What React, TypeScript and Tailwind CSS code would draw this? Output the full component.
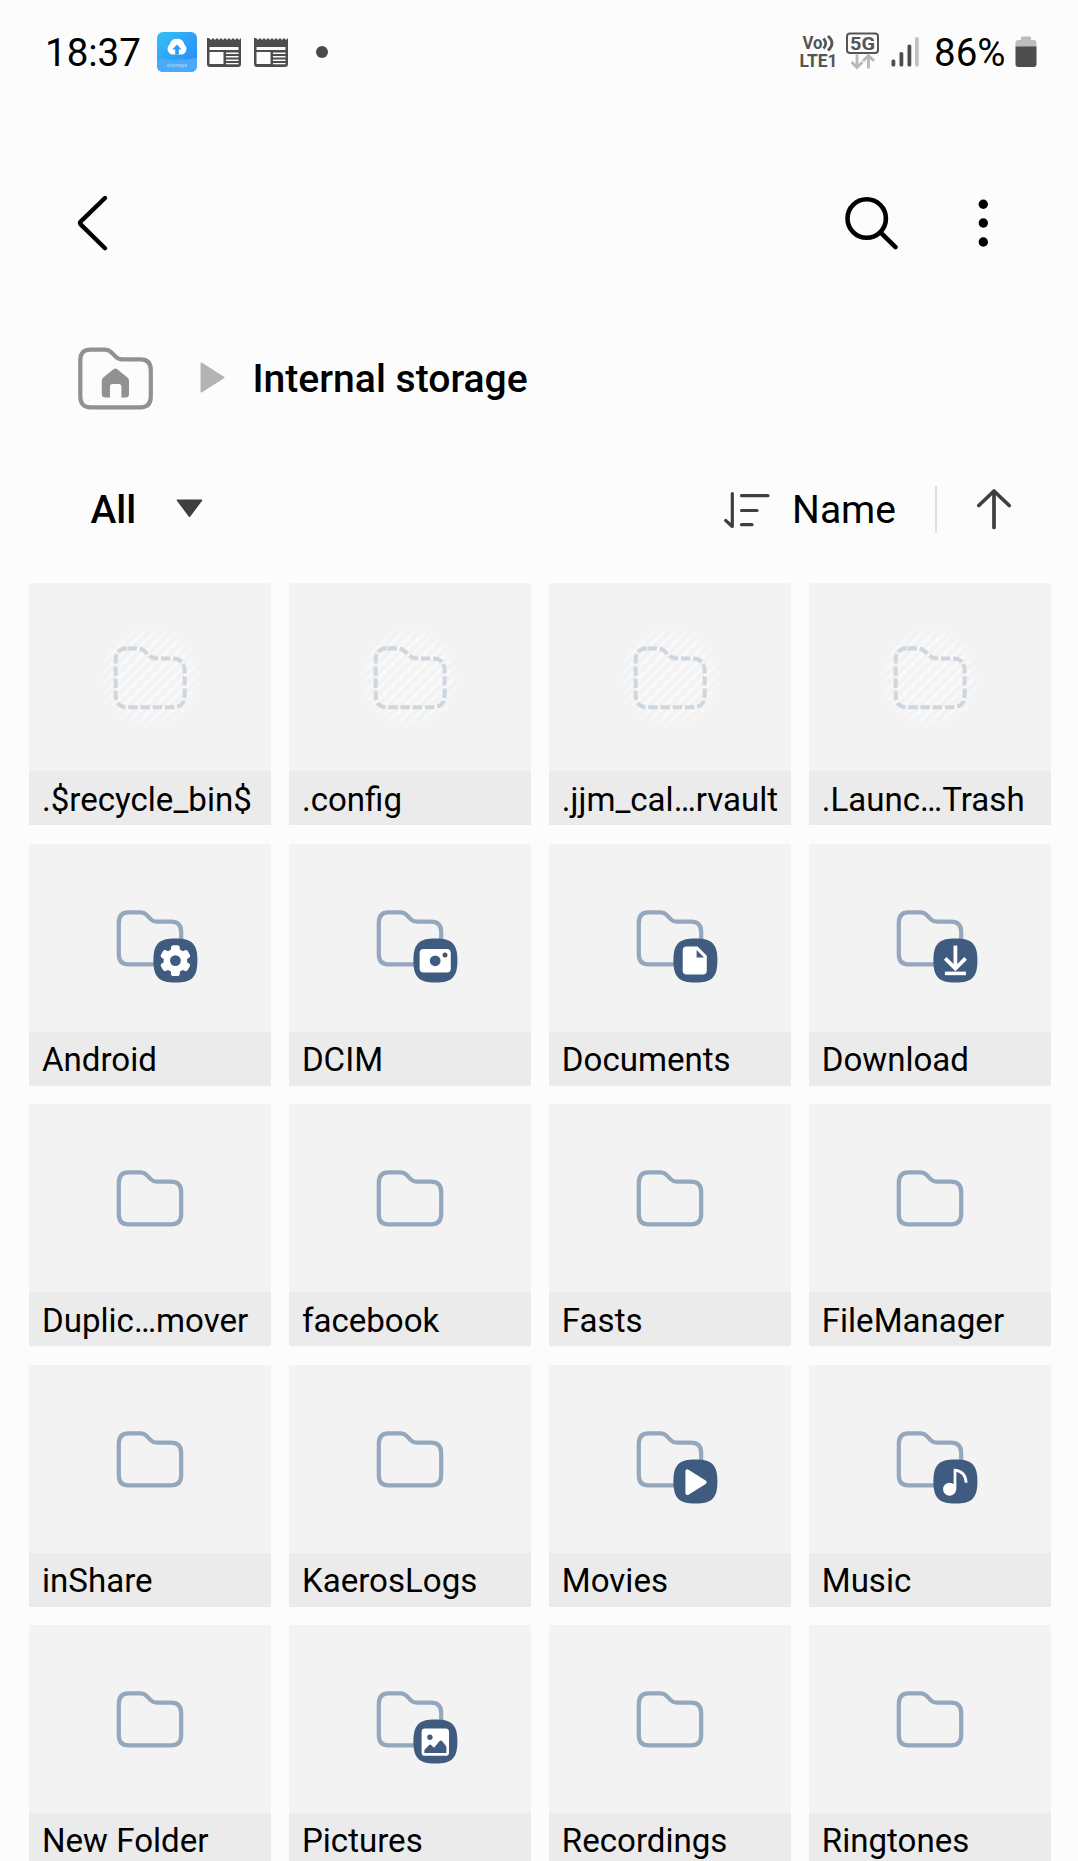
import type { ReactNode } from "react";

type Badge = "settings" | "camera" | "document" | "download" | "play" | "music" | "picture";

interface Folder {
  name: string;
  hidden?: boolean;
  badge?: Badge;
}

const FOLDERS: Folder[] = [
  { name: ".$recycle_bin$", hidden: true },
  { name: ".config", hidden: true },
  { name: ".jjm_cal…rvault", hidden: true },
  { name: ".Launc…Trash", hidden: true },
  { name: "Android", badge: "settings" },
  { name: "DCIM", badge: "camera" },
  { name: "Documents", badge: "document" },
  { name: "Download", badge: "download" },
  { name: "Duplic…mover" },
  { name: "facebook" },
  { name: "Fasts" },
  { name: "FileManager" },
  { name: "inShare" },
  { name: "KaerosLogs" },
  { name: "Movies", badge: "play" },
  { name: "Music", badge: "music" },
  { name: "New Folder" },
  { name: "Pictures", badge: "picture" },
  { name: "Recordings" },
  { name: "Ringtones" },
];

const NAVY = "#3f5b80";

const BADGES: Record<Badge, ReactNode> = {
  settings: (
    <>
      <g fill="#fff">
        <circle cx="22" cy="22" r="11.8" />
        <rect x="17.6" y="6.6" width="8.8" height="30.8" rx="2.6" />
        <rect x="17.6" y="6.6" width="8.8" height="30.8" rx="2.6" transform="rotate(60 22 22)" />
        <rect x="17.6" y="6.6" width="8.8" height="30.8" rx="2.6" transform="rotate(120 22 22)" />
      </g>
      <circle cx="22" cy="22" r="5.4" fill={NAVY} />
    </>
  ),
  camera: (
    <>
      <rect x="6.2" y="10.4" width="31.2" height="23.6" rx="4" fill="#fff" />
      <circle cx="21.8" cy="22.2" r="5.4" fill={NAVY} />
      <circle cx="31.6" cy="16.4" r="2.5" fill="#4a5564" />
    </>
  ),
  document: (
    <>
      <path d="M13.3 8H24.2L33.4 17.2V32A4 4 0 0 1 29.4 36H13.3A4 4 0 0 1 9.3 32V12A4 4 0 0 1 13.3 8Z" fill="#fff" />
      <path d="M23.2 11.4V18.8H30.6Z" fill={NAVY} />
    </>
  ),
  download: (
    <g stroke="#fff" fill="none">
      <path d="M22 7V30" strokeWidth="3.8" />
      <path d="M11.8 19.8L22 30L32.2 19.8" strokeWidth="3.8" />
      <path d="M11.5 34.8H32.5" strokeWidth="3.6" />
    </g>
  ),
  play: (
    <path d="M14 11.8V33.4L31.2 22.6Z" fill="#fff" stroke="#fff" strokeWidth="4" strokeLinejoin="round" />
  ),
  music: (
    <>
      <circle cx="16.2" cy="29.6" r="6.5" fill="#fff" />
      <path d="M21.6 30V10.6C28.5 11.6 32.5 16 32.7 23.2" fill="none" stroke="#fff" strokeWidth="2.7" />
    </>
  ),
  picture: (
    <>
      <rect x="8.2" y="9" width="27.4" height="27.2" rx="3.4" fill="#fff" />
      <circle cx="16.5" cy="17.6" r="2.7" fill={NAVY} />
      <path
        d="M11 33.4V30.4L15.4 25.6Q16.6 24.5 17.8 25.5L20.6 28.2L26 21.6Q27.4 20.2 28.8 21.6L33 26.8V33.4Z"
        fill={NAVY}
      />
    </>
  ),
};

function FolderIcon({ badge }: { badge?: Badge }) {
  return (
    <svg viewBox="0 0 242 188" className="block h-[188px] w-[242px]" fill="none">
      <path
        d="M99.4 68.4H111.9Q115 68.4 117.4 70.8L121.8 75.2Q124.4 77.6 127.8 77.6H141.9Q152.2 77.6 152.2 88V110Q152.2 120.4 141.9 120.4H99.4Q89.8 120.4 89.8 110V79Q89.8 68.4 99.4 68.4Z"
        stroke="#95a7bd"
        strokeWidth="4.2"
      />
      {badge && (
        <g transform="translate(124.4 94.6)">
          <path d="M22 0C38.5 0 44 5.5 44 22S38.5 44 22 44 0 38.5 0 22 5.5 0 22 0Z" fill={NAVY} />
          {BADGES[badge]}
        </g>
      )}
    </svg>
  );
}

function HiddenFolderIcon() {
  return (
    <svg viewBox="0 0 242 188" className="block h-[188px] w-[242px]" fill="none">
      <defs>
        <pattern id="hatch" width="7.6" height="7.6" patternUnits="userSpaceOnUse" patternTransform="rotate(45)">
          <rect width="3.2" height="7.6" fill="#f9f9f9" />
        </pattern>
        <radialGradient id="fade">
          <stop offset="0.75" stopColor="#fff" />
          <stop offset="1" stopColor="#fff" stopOpacity="0.2" />
        </radialGradient>
        <mask id="round">
          <circle cx="121" cy="94" r="52" fill="url(#fade)" />
        </mask>
      </defs>
      <rect x="68" y="41" width="106" height="106" fill="url(#hatch)" mask="url(#round)" />
      <path
        d="M98.5 65.4H109Q112.6 65.4 115.4 68L120.6 72.8Q123.6 75.5 127.6 75.5H143.5Q155.6 75.5 155.6 88V112Q155.6 124.2 143.5 124.2H98.5Q86.6 124.2 86.6 112V78Q86.6 65.4 98.5 65.4Z"
        stroke="#ced6de"
        strokeWidth="4.1"
        strokeDasharray="9.4 2.8"
      />
    </svg>
  );
}

function NewsIcon() {
  return (
    <svg viewBox="0 0 34 31" className="h-[31px] w-[34px]">
      <path d="M0 1H2L4 3L6 1L8 3L10 1L12 3L14 1L16 3L18 1L20 3L22 1L24 3L26 1L28 3L30 1L32 3L34 1V27Q34 30 31 30H3Q0 30 0 27Z" fill="#4d4d4d" />
      <path d="M2.5 10H31.5V13H2.5ZM2.5 15H16.5V27H2.5ZM19 15.5H31.5V17H19ZM19 19H31.5V20.5H19ZM19 22.5H31.5V24H19ZM19 26H31.5V27.2H19Z" fill="#fcfcfc" />
    </svg>
  );
}

function CloudAppIcon() {
  return (
    <svg viewBox="0 0 40 40" className="h-10 w-10">
      <defs>
        <linearGradient id="sky" x1="0" y1="0" x2="1" y2="1">
          <stop stopColor="#35c0f8" />
          <stop offset="1" stopColor="#2684f6" />
        </linearGradient>
        <clipPath id="tile">
          <rect width="40" height="40" rx="6" />
        </clipPath>
      </defs>
      <g clipPath="url(#tile)">
        <rect width="40" height="40" fill="url(#sky)" />
        <path d="M0 26Q20 29.5 40 26V40H0Z" fill="#4ba9f9" />
        <path d="M15 22.5A5.8 5.8 0 0 1 12.6 12.5A7.6 7.6 0 0 1 27.4 12.5A5.8 5.8 0 0 1 25 22.5Z" fill="#fff" />
        <path d="M20 12.5L24.6 17.4H21.8V22.6H18.2V17.4H15.4Z" fill="#2b9bf7" />
        <text x="20" y="34.5" textAnchor="middle" fontSize="6" fontWeight="700" fill="#8fd0fd" fontFamily="Roboto">
          storage
        </text>
      </g>
    </svg>
  );
}

function StatusBar() {
  return (
    <div className="flex h-[104px] items-center pr-[41px] pl-[45px]">
      <span className="w-[112px] pt-[2px] text-[38.5px] leading-none">18:37</span>
      <CloudAppIcon />
      <div className="ml-[10px] flex gap-[13px]">
        <NewsIcon />
        <NewsIcon />
      </div>
      <div className="ml-[28px] h-3 w-3 rounded-full bg-[#4a4a4a]" />

      <div className="ml-auto flex items-center">
        <svg viewBox="0 0 40 34" className="h-[34px] w-[40px] overflow-visible" fill="#555" fontFamily="Roboto" fontWeight="700">
          <text x="3.5" y="14" fontSize="17.5" textLength="20" lengthAdjust="spacingAndGlyphs">Vo</text>
          <path d="M24.5 3.5Q29 8.5 24.5 13.5M29 1Q37 8 29 15.5" fill="none" stroke="#555" strokeWidth="2.8" />
          <text x="0.5" y="31.5" fontSize="18" textLength="38" lengthAdjust="spacingAndGlyphs">LTE1</text>
        </svg>
        <svg viewBox="0 0 33 38" className="mb-[2px] ml-[7px] h-[38px] w-[33px] overflow-visible" fill="none">
          <rect x="1" y="1.5" width="31" height="19.5" rx="3" stroke="#555" strokeWidth="2" />
          <text x="4" y="17.8" fontSize="19" fontWeight="700" fill="#555" fontFamily="Roboto" textLength="25" lengthAdjust="spacingAndGlyphs">5G</text>
          <path d="M11 22.5V35M5.5 30L11 35.5L16.5 30M22.5 36.5V24M17 29L22.5 23.5L28 29" stroke="#b8b8b8" strokeWidth="2.8" />
        </svg>
        <svg viewBox="0 0 28 31" className="mb-[2px] ml-[12px] h-[31px] w-[28px]">
          <rect x="0.5" y="23.5" width="3.8" height="7" rx="1.6" fill="#4d4d4d" />
          <rect x="8.5" y="16" width="3.8" height="14.5" rx="1.6" fill="#4d4d4d" />
          <rect x="16.5" y="8.5" width="3.8" height="22" rx="1.6" fill="#4d4d4d" />
          <rect x="24" y="1" width="3.8" height="29.5" rx="1.6" fill="#c2c2c2" />
        </svg>
        <span className="ml-[15px] w-[81px] pt-[2px] text-[38.5px] leading-none">86%</span>
        <svg viewBox="0 0 22 32" className="h-[32px] w-[22px]">
          <path d="M6 1.5Q6 0.5 7.5 0.5H14.5Q16 0.5 16 1.5V4H18.5Q21.5 4 21.5 7V11H0.5V7Q0.5 4 3.5 4H6Z" fill="#bdbdbd" />
          <path d="M0.5 10.5H21.5V28Q21.5 31 18.5 31H3.5Q0.5 31 0.5 28Z" fill="#4d4d4d" />
        </svg>
      </div>
    </div>
  );
}

function Toolbar() {
  return (
    <div className="flex h-[237px] items-center pr-[89px] pl-[76px]">
      <svg viewBox="0 0 34 60" className="h-[60px] w-[34px]" fill="none">
        <path d="M29 5L4.9 28.4Q3.3 30 4.9 31.6L29 55.2" stroke="#000" strokeWidth="4.4" strokeLinecap="round" />
      </svg>
      <svg viewBox="0 0 60 60" className="ml-auto h-[60px] w-[60px]" fill="none" stroke="#000" strokeWidth="4.6">
        <circle cx="24.7" cy="25.5" r="19.2" />
        <path d="M38.5 39.3L53.5 54.1" strokeLinecap="round" />
      </svg>
      <svg viewBox="0 0 12 60" className="ml-[75px] h-[60px] w-[12px]">
        <circle cx="6.3" cy="11.2" r="4.7" />
        <circle cx="6.3" cy="30" r="4.7" />
        <circle cx="6.3" cy="49" r="4.7" />
      </svg>
    </div>
  );
}

function Breadcrumb() {
  return (
    <div className="flex h-[74px] items-center pl-[78px]">
      <svg viewBox="0 0 75 63" className="h-[63px] w-[75px]" fill="none">
        <path
          d="M12.5 2.6H27Q30.5 2.6 33.2 5.2L37.8 9.8Q40.3 12.3 44 12.3H62.5Q72.8 12.3 72.8 23V49.5Q72.8 60.3 62.5 60.3H12.5Q2.3 60.3 2.3 49.5V13Q2.3 2.6 12.5 2.6Z"
          stroke="#919191"
          strokeWidth="4.2"
        />
        <path
          d="M35.6 22.2Q37.4 21 39.2 22.2L49.5 30.4Q51 31.7 51 33.6V47Q51 50.6 47.5 50.6H43.4V39.5Q43.4 37 41 37H34.5Q32 37 32 39.5V50.6H27.5Q23.8 50.6 23.8 47V33.6Q23.8 31.7 25.3 30.4Z"
          fill="#919191"
        />
      </svg>
      <svg viewBox="0 0 25 31" className="mb-[2px] ml-[47px] h-[31px] w-[25px]">
        <path d="M1.5 1.5L23.5 15.5L1.5 29.5Z" fill="#b3b3b3" stroke="#b3b3b3" strokeWidth="2" strokeLinejoin="round" />
      </svg>
      <span className="ml-[27.5px] pt-[3px] text-[39.1px] leading-none font-medium">Internal storage</span>
    </div>
  );
}

function SortBar() {
  return (
    <div className="flex h-[168px] items-center pt-[21px] pr-[66.5px] pl-[90.5px]">
      <span className="pt-[2px] text-[39px] leading-none font-medium">All</span>
      <svg viewBox="0 0 27 19" className="mb-[3px] ml-[40px] h-[19px] w-[27px]">
        <path d="M1.5 1.2H25.5L13.5 17.2Z" fill="#3f3f3f" stroke="#3f3f3f" strokeWidth="1.6" strokeLinejoin="round" />
      </svg>
      <svg
        viewBox="0 0 48 40"
        className="ml-auto h-[40px] w-[48px]"
        fill="none"
        stroke="#3f3f3f"
        strokeWidth="3.2"
        strokeLinecap="round"
        strokeLinejoin="round"
      >
        <path d="M10.3 3.5V36.5L3.7 30.5" />
        <path d="M19.5 5.7H46M19.5 20.5H35M19.5 34.7H30" />
      </svg>
      <span className="ml-[22.5px] pt-[2px] text-[39px] leading-none">Name</span>
      <div className="ml-[39px] h-[47px] w-[1.5px] bg-[#dedede]" />
      <svg
        viewBox="0 0 36 42"
        className="mb-px ml-[39px] h-[42px] w-[36px]"
        fill="none"
        stroke="#3f3f3f"
        strokeWidth="3.7"
        strokeLinecap="round"
        strokeLinejoin="round"
      >
        <path d="M18 39.5V3M2.8 17.5L18 3L33.2 17.5" />
      </svg>
    </div>
  );
}

export default function App() {
  return (
    <main className="h-[1861px] w-[1078px] overflow-hidden bg-[#fcfcfc] font-['Roboto',sans-serif] text-black">
      <StatusBar />
      <Toolbar />
      <Breadcrumb />
      <SortBar />

      <div className="grid grid-cols-4 gap-x-[18.4px] gap-y-[18.4px] pt-[0.4px] pr-[27.3px] pl-[29.4px]">
        {FOLDERS.map((folder) => (
          <div key={folder.name} className="flex h-[242px] flex-col overflow-hidden bg-[#f3f3f3]">
            <div className="h-[188px] shrink-0">
              {folder.hidden ? <HiddenFolderIcon /> : <FolderIcon badge={folder.badge} />}
            </div>
            <div className="flex h-[54px] items-center bg-[#ebebeb] pt-[2px] pl-[12.6px] text-[33.1px] leading-none whitespace-nowrap">
              {folder.name}
            </div>
          </div>
        ))}
      </div>
    </main>
  );
}
